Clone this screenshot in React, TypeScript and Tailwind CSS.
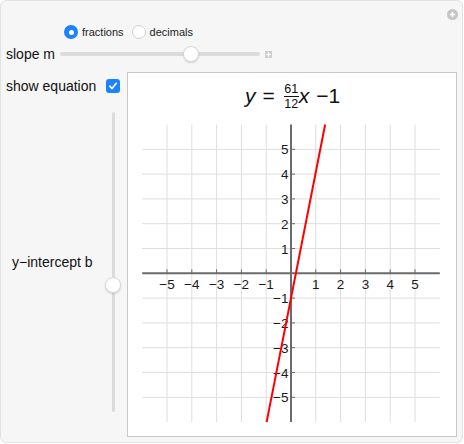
import React from "react";

const U = 24.8;
const OX = 163;
const OY = 155.3;
const ticks = [-5, -4, -3, -2, -1, 1, 2, 3, 4, 5];
const fmt = (n: number) => (n < 0 ? "\u2212" + Math.abs(n) : String(n));

function Plot() {
  const left = OX - 6 * U;
  const right = OX + 6 * U;
  const top = OY - 6 * U;
  const bottom = OY + 6 * U;
  // y = 61/12 x - 1
  const m = 61 / 12;
  const xa = (-6 + 1) / m;
  const xb = (6 + 1) / m;
  return (
    <svg width="328" height="318" className="block">
      {/* grid */}
      {ticks.map((i) => (
        <line key={"v" + i} x1={OX + i * U} y1={top} x2={OX + i * U} y2={bottom} stroke="#dedede" strokeWidth="1" />
      ))}
      {ticks.map((i) => (
        <line key={"h" + i} x1={left} y1={OY - i * U} x2={right} y2={OY - i * U} stroke="#dedede" strokeWidth="1" />
      ))}
      {/* axes */}
      <line x1={left} y1={OY} x2={right} y2={OY} stroke="#6b6b6b" strokeWidth="2" />
      <line x1={OX} y1={top} x2={OX} y2={bottom} stroke="#6b6b6b" strokeWidth="2" />
      {ticks.map((i) => (
        <line key={"tx" + i} x1={OX + i * U} y1={OY} x2={OX + i * U} y2={OY - 4} stroke="#6b6b6b" strokeWidth="1" />
      ))}
      {ticks.map((i) => (
        <line key={"ty" + i} x1={OX} y1={OY - i * U} x2={OX + 4} y2={OY - i * U} stroke="#6b6b6b" strokeWidth="1" />
      ))}
      {/* labels */}
      <g fontFamily="'Liberation Sans', Arial, sans-serif" fontSize="13.5" fill="#1a1a1a">
        {ticks.map((i) => (
          <text key={"lx" + i} x={OX + i * U} y={OY + 16} textAnchor="middle">
            {fmt(i)}
          </text>
        ))}
        {ticks.map((i) => (
          <text key={"ly" + i} x={OX - 2.5} y={OY - i * U + 5} textAnchor="end">
            {fmt(i)}
          </text>
        ))}
      </g>
      {/* line */}
      <line x1={OX + xa * U} y1={bottom} x2={OX + xb * U} y2={top} stroke="#ff0000" strokeWidth="2" />
    </svg>
  );
}

function PlusCircle() {
  return (
    <svg width="11" height="11" viewBox="0 0 11 11">
      <circle cx="5.5" cy="5.5" r="5.5" fill="#c4c4c4" />
      <path d="M5.5 2.8v5.4M2.8 5.5h5.4" stroke="#fff" strokeWidth="1.6" />
    </svg>
  );
}

export default function App() {
  return (
    <div className="w-[464px] h-[444px] bg-white" style={{ fontFamily: "'Liberation Sans', Arial, sans-serif" }}>
      <div className="w-[463px] h-[443px] bg-[#f6f6f6] border border-[#e2e2e2] rounded-md flex flex-col">
        {/* top bar */}
        <div className="h-[24px] flex justify-end pr-[4px] pt-[8px]">
          <PlusCircle />
        </div>

        {/* radios */}
        <div className="h-[14px] flex items-center pl-[63px] text-[11px] text-[#222]">
          <span className="w-[14px] h-[14px] rounded-full bg-[#1a82fb] flex items-center justify-center">
            <span className="w-[5px] h-[5px] rounded-full bg-white" />
          </span>
          <span className="ml-[4px]">fractions</span>
          <span className="ml-[8px] w-[14px] h-[14px] rounded-full bg-white border border-[#d0d0d0]" />
          <span className="ml-[4px]">decimals</span>
        </div>

        {/* slope slider */}
        <div className="mt-[7px] h-[16px] flex items-center pl-[5px]">
          <span className="w-[54px] text-[14px] text-[#111]">slope m</span>
          <div className="relative w-[200px] h-[4px] rounded-full bg-[#dcdcdc]">
            <span className="absolute top-[-6px] left-[123px] w-[16px] h-[16px] rounded-full bg-white border border-[#d8d8d8] shadow-[0_1px_2px_rgba(0,0,0,0.15)]" />
          </div>
          <span className="ml-[5px] w-[7px] h-[7px] bg-[#cfcfcf] flex items-center justify-center">
            <svg width="7" height="7" viewBox="0 0 7 7">
              <path d="M3.5 1.2v4.6M1.2 3.5h4.6" stroke="#fff" strokeWidth="1.2" />
            </svg>
          </span>
        </div>

        {/* main row */}
        <div className="mt-[10px] flex">
          <div className="w-[126px] flex flex-col">
            <div className="mt-[7px] h-[14px] flex items-center pl-[5px]">
              <span className="w-[100px] text-[14px] text-[#111]">show equation</span>
              <span className="w-[14px] h-[14px] rounded-[3px] bg-[#1a82fb] flex items-center justify-center">
                <svg width="10" height="10" viewBox="0 0 10 10">
                  <path d="M1.8 5.2l2.2 2.3 4.3-5.2" stroke="#fff" strokeWidth="1.7" fill="none" strokeLinecap="round" strokeLinejoin="round" />
                </svg>
              </span>
            </div>
            <div className="mt-[19px] flex items-center">
              <span className="w-[111px] pl-[11px] text-[14px] text-[#111]">y−intercept b</span>
              <div className="relative w-[3px] h-[300px] rounded-full bg-[#dcdcdc]">
                <span className="absolute top-[165px] left-[-7px] w-[16px] h-[16px] rounded-full bg-white border border-[#d8d8d8] shadow-[0_1px_2px_rgba(0,0,0,0.15)]" />
              </div>
            </div>
          </div>

          <div className="w-[330px] h-[365px] bg-white border border-[#c8c8c8] flex flex-col">
            <div className="h-[45px] flex items-center justify-center pl-[1px] text-[#111]">
              <span className="italic text-[21px]">y</span>
              <span className="text-[21px] ml-[7px]">=</span>
              <span className="ml-[9px] flex flex-col items-center text-[12.5px] leading-[12px] mt-[2px]">
                <span>61</span>
                <span className="w-[15px] h-[1px] bg-[#111] my-[1px]" />
                <span>12</span>
              </span>
              <span className="italic text-[21px]">x</span>
              <span className="text-[21px] ml-[7px]">−1</span>
            </div>
            <Plot />
          </div>
        </div>
      </div>
    </div>
  );
}
